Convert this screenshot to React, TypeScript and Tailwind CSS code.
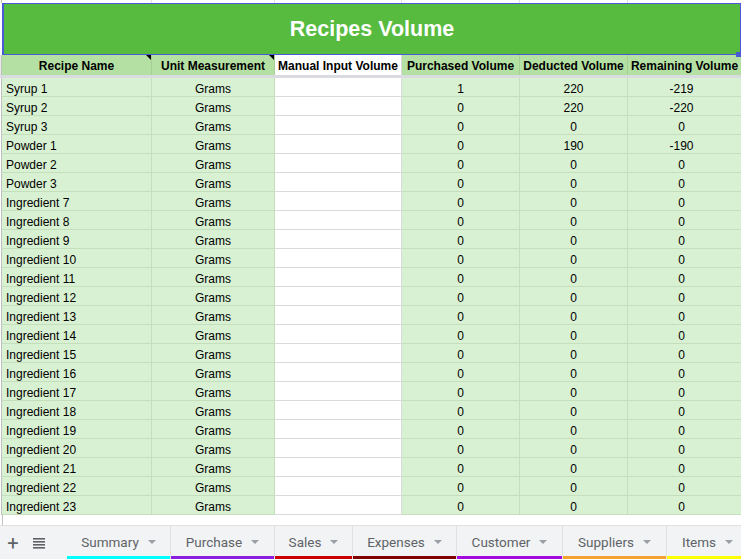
const rows: [string, string, string, string][] = [
  ["Syrup 1", "1", "220", "-219"],
  ["Syrup 2", "0", "220", "-220"],
  ["Syrup 3", "0", "0", "0"],
  ["Powder 1", "0", "190", "-190"],
  ["Powder 2", "0", "0", "0"],
  ["Powder 3", "0", "0", "0"],
  ...Array.from({ length: 17 }, (_, i): [string, string, string, string] => [
    `Ingredient ${i + 7}`,
    "0",
    "0",
    "0",
  ]),
];

const tabs = [
  { name: "Summary", w: "w-[104px]", line: "bg-[#00ffff]" },
  { name: "Purchase", w: "w-[104px]", line: "bg-[#8a1ee0]" },
  { name: "Sales", w: "w-[78px]", line: "bg-[#cc0000]" },
  { name: "Expenses", w: "w-[104px]", line: "bg-[#800000]" },
  { name: "Customer", w: "w-[106px]", line: "bg-[#a20ae0]" },
  { name: "Suppliers", w: "w-[104px]", line: "bg-[#f4a330]" },
  { name: "Items", w: "w-[82px]", line: "bg-[#ffff00]" },
];

const cols = "grid grid-cols-[2px_150px_123px_127px_118px_108px_1fr]";
const green = "border-b border-r border-[#c5dfbd] bg-[#d9f1d3]";

function Marker() {
  return (
    <span className="absolute right-0 top-0 h-0 w-0 border-l-[5px] border-t-[5px] border-l-transparent border-t-black" />
  );
}

export default function App() {
  return (
    <div className="flex h-[559px] w-[741px] flex-col overflow-hidden bg-white font-['Liberation_Sans',Arial,sans-serif] text-[12px] text-black">
      {/* sliver of the row above */}
      <div className={`${cols} h-[3px] shrink-0`}>
        <div className="border-r border-[#c0c0c0]" />
        <div className="border-r border-[#e2e2e2]" />
        <div className="border-r border-[#e2e2e2]" />
        <div className="border-r border-[#e2e2e2]" />
        <div className="border-r border-[#e2e2e2]" />
        <div className="border-r border-[#e2e2e2]" />
        <div />
      </div>

      {/* merged title cell with selection outline */}
      <div className="flex h-[52px] shrink-0 pl-[2px]">
        <div className="relative flex flex-1 items-center justify-center border border-l-2 border-[#4a5ad6] bg-[#57bb3f]">
          <span className="text-[21.5px] font-bold text-white">Recipes Volume</span>
          <span className="absolute -bottom-[3px] -right-[1px] h-[5px] w-[5px] bg-[#4a5ad6]" />
        </div>
      </div>

      {/* header row */}
      <div className={`${cols} h-[20px] shrink-0 font-bold`}>
        <div className="border-r border-[#c0c0c0] bg-[#e8e8e8]" />
        <div className="relative flex items-center justify-center border-r border-[#a6cf96] bg-[#b5e0a4] pt-[1px]">
          Recipe Name
          <Marker />
        </div>
        <div className="relative flex items-center justify-center border-r border-[#a6cf96] bg-[#b5e0a4] pt-[1px]">
          Unit Measurement
          <Marker />
        </div>
        <div className="flex items-center justify-center border-r border-[#dadada] bg-white pt-[1px]">
          Manual Input Volume
        </div>
        <div className="flex items-center justify-center border-r border-[#a6cf96] bg-[#b5e0a4] pt-[1px]">
          Purchased Volume
        </div>
        <div className="flex items-center justify-center border-r border-[#a6cf96] bg-[#b5e0a4] pt-[1px]">
          Deducted Volume
        </div>
        <div className="flex items-center justify-center bg-[#b5e0a4] pt-[1px]">Remaining Volume</div>
      </div>

      {/* frozen-row divider */}
      <div className="h-[3px] shrink-0 bg-[#d9dbe1]" />

      {/* data rows */}
      <div className="flex shrink-0 flex-col leading-[14px]">
        {rows.map(([name, bought, used, left]) => (
          <div key={name} className={`${cols} h-[19px]`}>
            <div className="border-r border-[#c0c0c0]" />
            <div className={`flex items-end pl-[4px] ${green}`}>{name}</div>
            <div className={`flex items-end justify-center ${green}`}>Grams</div>
            <div className="border-b border-r border-[#dadada] bg-white" />
            <div className={`flex items-end justify-center ${green}`}>{bought}</div>
            <div className={`flex items-end justify-center ${green}`}>{used}</div>
            <div className="flex items-end justify-center border-b border-[#c5dfbd] bg-[#d9f1d3] pr-[6px]">
              {left}
            </div>
          </div>
        ))}
      </div>

      {/* blank space before the sheet bar */}
      <div className="flex h-[10px] shrink-0">
        <div className="w-[3px] border-r border-[#c0c0c0]" />
      </div>

      {/* sheet tabs */}
      <div className="flex flex-1 items-stretch border-t border-[#e0e0e0] bg-[#f1f3f4] font-['Roboto',Arial,sans-serif] text-[13.5px] text-[#5f6368]">
        <div className="flex w-[67px] shrink-0 items-center">
          <span className="ml-[6px] flex h-[24px] w-[14px] items-center justify-center text-[20px] leading-none text-[#5f6368]">
            +
          </span>
          <svg className="ml-[13px]" width="12" height="12" viewBox="0 0 12 12">
            <g fill="#5f6368">
              <rect x="0" y="1" width="12" height="1.6" />
              <rect x="0" y="4" width="12" height="1.6" />
              <rect x="0" y="7" width="12" height="1.6" />
              <rect x="0" y="10" width="12" height="1.6" />
            </g>
          </svg>
        </div>
        {tabs.map((t) => (
          <div
            key={t.name}
            className={`relative flex ${t.w} shrink-0 items-center justify-center gap-[9px] border-r border-[#dfe1e5] pb-[1px]`}
          >
            <span>{t.name}</span>
            <span className="h-0 w-0 border-x-[4px] border-t-[4px] border-x-transparent border-t-[#9aa0a6]" />
            <span className={`absolute bottom-0 left-0 right-0 h-[3px] ${t.line}`} />
          </div>
        ))}
      </div>
    </div>
  );
}
